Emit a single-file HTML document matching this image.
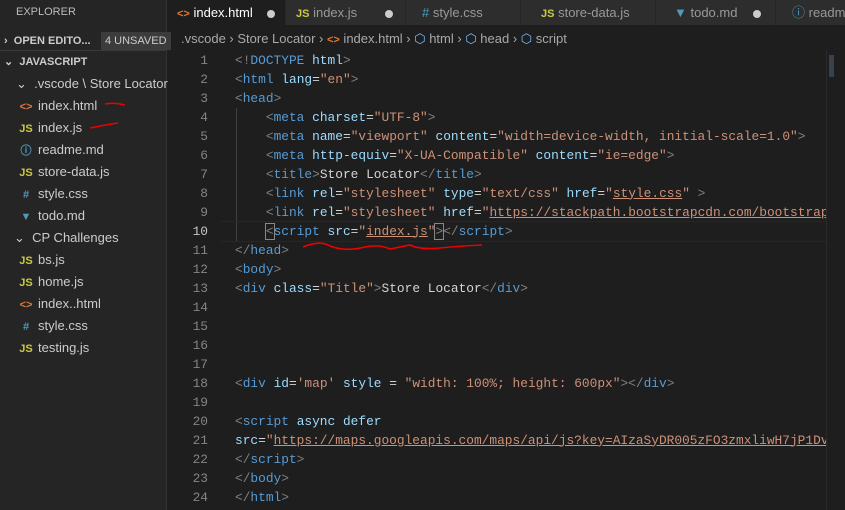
<!DOCTYPE html>
<html><head><style>
body{margin:0;width:845px;height:510px;background:#1e1e1e;overflow:hidden;font-family:"Liberation Sans",sans-serif;position:relative}
#side{position:absolute;left:0;top:0;width:166px;height:510px;background:#252526;border-right:1px solid #333}
.si{position:absolute;left:0;height:22px;line-height:22px;font-size:13px;color:#ccc;white-space:nowrap}
.hd{font-size:11px;font-weight:bold;color:#ccc}
.ic{display:inline-block;width:16px;font-size:11px;font-weight:bold;text-align:center;margin-right:4px}
#tabs{position:absolute;left:167px;top:0;right:0;height:25px;background:#252526}
.tab{position:absolute;top:0;height:25px;line-height:25px;font-size:13px;color:#999;background:#2d2d2d;border-right:1px solid #252526;padding-left:10px;box-sizing:border-box;white-space:nowrap}
.dot{display:inline-block;width:8px;height:8px;border-radius:50%;background:#ccc;margin-left:14px;vertical-align:middle}
#bc{position:absolute;left:181px;top:31px;font-size:13px;color:#a9a9a9;white-space:nowrap}
.code{position:absolute;left:0;font-family:"Liberation Mono",monospace;font-size:12.85px;white-space:pre;color:#d4d4d4;height:19px;line-height:19px}
.ln{position:absolute;left:170px;width:38px;text-align:right;font-family:"Liberation Mono",monospace;font-size:12.85px;color:#858585;height:19px;line-height:19px}
.b{color:#808080}.t{color:#569cd6}.a{color:#9cdcfe}.s{color:#ce9178}.u{text-decoration:underline}
</style></head><body>
<div id="side">
<div class="si" style="top:1px;left:16px;font-size:11px;color:#bbb">EXPLORER</div>
<div class="si hd" style="top:30px;left:4px;width:162px">› &nbsp;OPEN EDITO...<span style="position:absolute;left:97px;top:2px;height:18px;line-height:18px;background:#3c3c3c;padding:0 4px;font-weight:normal;color:#ccc">4 UNSAVED</span></div>
<div class="si hd" style="top:51px;left:4px;width:162px">⌄ &nbsp;JAVASCRIPT</div>
<div style="position:absolute;left:0;top:50px;width:166px;height:1px;background:#3a3a3a"></div>
<div class="si" style="top:73px;left:16px">⌄ &nbsp;.vscode \ Store Locator</div>
<div class="si" style="top:95px;left:18px"><span class="ic" style="color:#e37933">&lt;&gt;</span>index.html</div>
<div class="si" style="top:117px;left:18px"><span class="ic" style="color:#cbcb41">JS</span>index.js</div>
<div class="si" style="top:139px;left:18px"><span class="ic" style="color:#519aba">ⓘ</span>readme.md</div>
<div class="si" style="top:161px;left:18px"><span class="ic" style="color:#cbcb41">JS</span>store-data.js</div>
<div class="si" style="top:183px;left:18px"><span class="ic" style="color:#519aba">#</span>style.css</div>
<div class="si" style="top:205px;left:18px"><span class="ic" style="color:#519aba">▼</span>todo.md</div>
<div class="si" style="top:227px;left:14px">⌄ &nbsp;CP Challenges</div>
<div class="si" style="top:249px;left:18px"><span class="ic" style="color:#cbcb41">JS</span>bs.js</div>
<div class="si" style="top:271px;left:18px"><span class="ic" style="color:#cbcb41">JS</span>home.js</div>
<div class="si" style="top:293px;left:18px"><span class="ic" style="color:#e37933">&lt;&gt;</span>index..html</div>
<div class="si" style="top:315px;left:18px"><span class="ic" style="color:#519aba">#</span>style.css</div>
<div class="si" style="top:337px;left:18px"><span class="ic" style="color:#cbcb41">JS</span>testing.js</div>
<svg style="position:absolute;left:0;top:0" width="166" height="140"><path d="M105 104 Q115 102 125 105" stroke="#e00" stroke-width="1.5" fill="none"/><path d="M90 128 Q105 125 118 123" stroke="#e00" stroke-width="1.5" fill="none"/></svg>
</div>
<div id="tabs">
<div class="tab" style="left:0;width:119px;background:#1e1e1e;color:#fff"><span style="color:#e37933;font-size:11px;font-weight:bold">&lt;&gt;</span> index.html<span class="dot"></span></div>
<div class="tab" style="left:119px;width:120px"><span style="color:#cbcb41;font-size:11px;font-weight:bold">JS</span> index.js<span class="dot" style="margin-left:28px"></span></div>
<div class="tab" style="left:239px;width:115px;padding-left:16px"><span style="color:#519aba">#</span> style.css</div>
<div class="tab" style="left:354px;width:135px;padding-left:20px"><span style="color:#cbcb41;font-size:11px;font-weight:bold">JS</span> store-data.js</div>
<div class="tab" style="left:489px;width:120px;padding-left:18px"><span style="color:#519aba">▼</span> todo.md<span class="dot" style="margin-left:16px"></span></div>
<div class="tab" style="left:609px;width:80px;padding-left:16px"><span style="color:#519aba">ⓘ</span> readme</div>
</div>
<div id="bc">.vscode › Store Locator › <span style="color:#e37933;font-size:11px;font-weight:bold">&lt;&gt;</span> index.html › <span style="color:#75beff">⬡</span> html › <span style="color:#75beff">⬡</span> head › <span style="color:#75beff">⬡</span> script</div>
<div style="position:absolute;left:236px;top:108px;width:1px;height:133px;background:#404040"></div>
<div style="position:absolute;left:826px;top:50px;width:1px;height:460px;background:#2a2a2a"></div>
<div style="position:absolute;left:829px;top:55px;width:5px;height:22px;background:#4a5a6a;opacity:.6"></div>
<div id="code"></div>
<script>
var L=[
'<span class="b">&lt;!</span><span class="t">DOCTYPE</span> <span class="a">html</span><span class="b">&gt;</span>',
'<span class="b">&lt;</span><span class="t">html</span> <span class="a">lang</span>=<span class="s">"en"</span><span class="b">&gt;</span>',
'<span class="b">&lt;</span><span class="t">head</span><span class="b">&gt;</span>',
'    <span class="b">&lt;</span><span class="t">meta</span> <span class="a">charset</span>=<span class="s">"UTF-8"</span><span class="b">&gt;</span>',
'    <span class="b">&lt;</span><span class="t">meta</span> <span class="a">name</span>=<span class="s">"viewport"</span> <span class="a">content</span>=<span class="s">"width=device-width, initial-scale=1.0"</span><span class="b">&gt;</span>',
'    <span class="b">&lt;</span><span class="t">meta</span> <span class="a">http-equiv</span>=<span class="s">"X-UA-Compatible"</span> <span class="a">content</span>=<span class="s">"ie=edge"</span><span class="b">&gt;</span>',
'    <span class="b">&lt;</span><span class="t">title</span><span class="b">&gt;</span>Store Locator<span class="b">&lt;/</span><span class="t">title</span><span class="b">&gt;</span>',
'    <span class="b">&lt;</span><span class="t">link</span> <span class="a">rel</span>=<span class="s">"stylesheet"</span> <span class="a">type</span>=<span class="s">"text/css"</span> <span class="a">href</span>=<span class="s">"<span class="u">style.css</span>"</span> <span class="b">&gt;</span>',
'    <span class="b">&lt;</span><span class="t">link</span> <span class="a">rel</span>=<span class="s">"stylesheet"</span> <span class="a">href</span>=<span class="s">"<span class="u">https://stackpath.bootstrapcdn.com/bootstrap/4.4.1/css</span></span>',
'    <span class="b" style="outline:1px solid #888">&lt;</span><span class="t">script</span> <span class="a">src</span>=<span class="s">"<span class="u">index.js</span>"</span><span class="b" style="outline:1px solid #888">&gt;</span><span class="b">&lt;/</span><span class="t">script</span><span class="b">&gt;</span>',
'<span class="b">&lt;/</span><span class="t">head</span><span class="b">&gt;</span>',
'<span class="b">&lt;</span><span class="t">body</span><span class="b">&gt;</span>',
'<span class="b">&lt;</span><span class="t">div</span> <span class="a">class</span>=<span class="s">"Title"</span><span class="b">&gt;</span>Store Locator<span class="b">&lt;/</span><span class="t">div</span><span class="b">&gt;</span>',
'','','','',
'<span class="b">&lt;</span><span class="t">div</span> <span class="a">id</span>=<span class="s">\'map\'</span> <span class="a">style</span> = <span class="s">"width: 100%; height: 600px"</span><span class="b">&gt;&lt;/</span><span class="t">div</span><span class="b">&gt;</span>',
'',
'<span class="b">&lt;</span><span class="t">script</span> <span class="a">async</span> <span class="a">defer</span>',
'<span class="a">src</span>=<span class="s">"<span class="u">https://maps.googleapis.com/maps/api/js?key=AIzaSyDR005zFO3zmxliwH7jP1DvAbcdefgh</span></span>',
'<span class="b">&lt;/</span><span class="t">script</span><span class="b">&gt;</span>',
'<span class="b">&lt;/</span><span class="t">body</span><span class="b">&gt;</span>',
'<span class="b">&lt;/</span><span class="t">html</span><span class="b">&gt;</span>'];
var h='';
for(var i=0;i<L.length;i++){var y=50.5+19*i;
h+='<div class="ln" style="top:'+y+'px'+(i==9?';color:#c6c6c6':'')+'">'+(i+1)+'</div>';
h+='<div class="code" style="left:235px;top:'+y+'px;width:591px;overflow:hidden">'+L[i]+'</div>';}
document.getElementById('code').innerHTML=h;
</script>
<div style="position:absolute;left:220px;top:221px;width:606px;height:19px;border-top:1px solid #262626;border-bottom:1px solid #262626;pointer-events:none"></div>
<svg style="position:absolute;left:0;top:0" width="845" height="510"><path d="M303 247 Q320 240 330 246 Q345 252 365 247 Q380 244 390 249 Q400 247 410 245 Q420 250 440 248 Q460 246 482 245" stroke="#e00" stroke-width="1.6" fill="none"/></svg>
</body></html>
